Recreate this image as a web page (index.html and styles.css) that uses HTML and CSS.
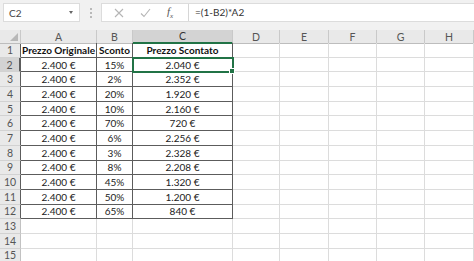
FILE: index.html
```html
<!DOCTYPE html>
<html lang="it">
<head>
  <meta charset="utf-8">
  <title>Prezzo Scontato</title>
  <link rel="stylesheet" href="styles.css">
</head>
<body>
  <div class="formula-bar">
    <div class="name-box">
      <span>C2</span>
      <span class="caret"></span>
    </div>
    <div class="grip"><i></i><i></i><i></i></div>
    <div class="fx-box">
      <div class="fx-icons">
        <svg width="10" height="10" viewBox="0 0 10 10"><path d="M1 1L9 9M9 1L1 9" stroke="#b5b5b5" stroke-width="1.1" fill="none"/></svg>
        <svg width="11" height="10" viewBox="0 0 11 10"><path d="M1 5.5L4 8.5L10 1" stroke="#b5b5b5" stroke-width="1.1" fill="none"/></svg>
        <span class="fx">f<sub>x</sub></span>
      </div>
      <div class="formula">=(1-B2)*A2</div>
    </div>
  </div>

  <div class="sheet">
    <div class="row head">
      <div class="corner"></div><div>A</div><div>B</div><div class="sel">C</div><div>D</div><div>E</div><div>F</div><div>G</div><div>H</div>
    </div>
    <div class="row table bold">
      <div class="num">1</div><div>Prezzo Originale</div><div>Sconto</div><div>Prezzo Scontato</div><div></div><div></div><div></div><div></div><div></div>
    </div>
    <div class="row table">
      <div class="num sel">2</div><div>2.400 €</div><div>15%</div><div class="active">2.040 €</div><div></div><div></div><div></div><div></div><div></div>
    </div>
    <div class="row table">
      <div class="num">3</div><div>2.400 €</div><div>2%</div><div>2.352 €</div><div></div><div></div><div></div><div></div><div></div>
    </div>
    <div class="row table">
      <div class="num">4</div><div>2.400 €</div><div>20%</div><div>1.920 €</div><div></div><div></div><div></div><div></div><div></div>
    </div>
    <div class="row table">
      <div class="num">5</div><div>2.400 €</div><div>10%</div><div>2.160 €</div><div></div><div></div><div></div><div></div><div></div>
    </div>
    <div class="row table">
      <div class="num">6</div><div>2.400 €</div><div>70%</div><div>720 €</div><div></div><div></div><div></div><div></div><div></div>
    </div>
    <div class="row table">
      <div class="num">7</div><div>2.400 €</div><div>6%</div><div>2.256 €</div><div></div><div></div><div></div><div></div><div></div>
    </div>
    <div class="row table">
      <div class="num">8</div><div>2.400 €</div><div>3%</div><div>2.328 €</div><div></div><div></div><div></div><div></div><div></div>
    </div>
    <div class="row table">
      <div class="num">9</div><div>2.400 €</div><div>8%</div><div>2.208 €</div><div></div><div></div><div></div><div></div><div></div>
    </div>
    <div class="row table">
      <div class="num">10</div><div>2.400 €</div><div>45%</div><div>1.320 €</div><div></div><div></div><div></div><div></div><div></div>
    </div>
    <div class="row table">
      <div class="num">11</div><div>2.400 €</div><div>50%</div><div>1.200 €</div><div></div><div></div><div></div><div></div><div></div>
    </div>
    <div class="row table">
      <div class="num">12</div><div>2.400 €</div><div>65%</div><div>840 €</div><div></div><div></div><div></div><div></div><div></div>
    </div>
    <div class="row">
      <div class="num">13</div><div></div><div></div><div></div><div></div><div></div><div></div><div></div><div></div>
    </div>
    <div class="row">
      <div class="num">14</div><div></div><div></div><div></div><div></div><div></div><div></div><div></div><div></div>
    </div>
    <div class="row">
      <div class="num">15</div><div></div><div></div><div></div><div></div><div></div><div></div><div></div><div></div>
    </div>
  </div>
</body>
</html>
```

FILE: styles.css
```css
* {
  box-sizing: border-box;
}
body {
  margin: 0;
  font-family: "Lato", "Open Sans", sans-serif;
  background-color: #fff;
  color: #222;
  overflow: hidden;
}
.formula-bar {
  display: flex;
  align-items: center;
  height: 30px;
  padding: 3px 0 8px 3px;
  background-color: #f1f1f1;
}
.name-box {
  display: flex;
  align-items: center;
  justify-content: space-between;
  width: 77px;
  height: 19px;
  padding: 0 6px 0 5px;
  background-color: #fff;
  border: 1px solid #dcdcdc;
  font-size: 10px;
  color: #444;
}
.caret {
  width: 0;
  height: 0;
  border-left: 2.5px solid transparent;
  border-right: 2.5px solid transparent;
  border-top: 3px solid #666;
}
.grip {
  display: flex;
  flex-direction: column;
  gap: 2px;
  width: 21px;
  align-items: center;
}
.grip i {
  width: 2px;
  height: 2px;
  background-color: #b9b9b9;
}
.fx-box {
  flex: 1;
  display: flex;
  height: 19px;
  border: 1px solid #dcdcdc;
  border-right: 0;
  background-color: #fff;
}
.fx-icons {
  display: flex;
  align-items: center;
  gap: 16px;
  width: 87px;
  padding-left: 12px;
  border-right: 1px solid #d6d6d6;
}
.fx {
  font-family: "Liberation Serif", serif;
  font-style: italic;
  font-size: 11px;
  color: #555;
}
.fx sub {
  font-size: 7px;
}
.formula {
  padding-left: 6px;
  font-size: 10px;
  line-height: 17px;
  color: #333;
}
.sheet {
  font-size: 10px;
}
.row {
  display: grid;
  grid-template-columns: 21px 76px 36px 100px 47px 49px 48px 48px 49px;
  height: 14.7px;
}
.row > div {
  display: flex;
  align-items: center;
  justify-content: center;
  border-right: 1px solid #dcdcdc;
  border-bottom: 1px solid #dcdcdc;
  white-space: nowrap;
}
.row.head {
  height: 13px;
}
.row.head > div {
  background-color: #e9e9e9;
  border-right-color: #c9c9c9;
  border-bottom-color: #bdbdbd;
  color: #555;
  font-size: 10.5px;
}
.row.head > div.sel {
  background-color: #d3d3d3;
  border-bottom: 2px solid #217346;
  color: #333;
}
.corner {
  position: relative;
}
.corner::after {
  content: "";
  position: absolute;
  right: 2px;
  bottom: 2px;
  border-left: 8px solid transparent;
  border-bottom: 8px solid #b8b8b8;
}
.row > div.num {
  background-color: #e9e9e9;
  border-right-color: #c2c2c2;
  border-bottom-color: #d2d2d2;
  color: #555;
  font-size: 10.5px;
}
.row > div.num.sel {
  background-color: #d3d3d3;
  border-right: 2px solid #217346;
}
.row.table > div:nth-child(2),
.row.table > div:nth-child(3),
.row.table > div:nth-child(4) {
  border-right-color: #5c5c5c;
  border-bottom-color: #5c5c5c;
}
.row.table > div.num {
  border-right-color: #5c5c5c;
}
.row.bold {
  font-weight: bold;
  color: #111;
}
.row.bold > div.num {
  font-weight: normal;
}
.active {
  position: relative;
  outline: 2px solid #217346;
  outline-offset: -1px;
}
.active::after {
  content: "";
  position: absolute;
  right: -3px;
  bottom: -3px;
  width: 4px;
  height: 4px;
  background-color: #217346;
  border: 1px solid #fff;
}
```
